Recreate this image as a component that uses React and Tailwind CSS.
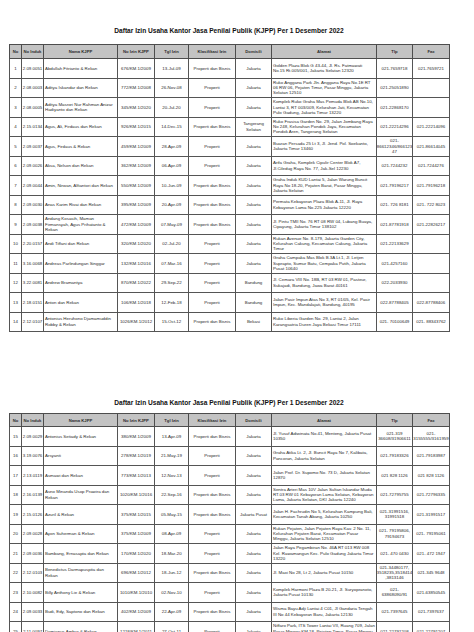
const HEAD = ["No", "No Induk", "Nama KJPP", "No Izin KJPP", "Tgl Izin", "Klasifikasi Izin", "Domisili", "Alamat", "Tlp", "Fax"];
const LEFT = [false, false, true, false, false, false, false, true, false, false];

const PAGE1 = [
  ["1", "2.09.0051", "Abdullah Fitrianto & Rekan", "676/KM.1/2009", "13-Jul-09", "Properti dan Bisnis", "Jakarta", "Golden Plaza Blok G 43-44, Jl. Rs. Fatmawati No.15 Rt.005/001, Jakarta Selatan 12320", "021-7659718", "021-7659721"],
  ["2", "2.08.0003", "Aditya Iskandar dan Rekan", "772/KM.1/2008", "26-Nov-08", "Properti", "Jakarta", "Ruko Anggana Park Jln. Anggana Raya No.1E RT 06 RW 06, Pejaten Timur, Pasar Minggu, Jakarta Selatan 12510", "021-25051890", ""],
  ["3", "2.08.0005", "Aditya Masrori Nur Rahman Anizar Hadiyanto dan Rekan", "345/KM.1/2020", "20-Jul-20", "Properti", "Jakarta", "Komplek Ruko Graha Mas Pemuda Blok AB No.10, Lantai 3, RT 003/009, Kelurahan Jati, Kecamatan Pulo Gadung, Jakarta Timur 13220", "021-22868170", ""],
  ["4", "2.15.0134", "Agus, Ali, Firdaus dan Rekan", "926/KM.1/2015", "14-Dec-15", "Properti dan Bisnis", "Tangerang Selatan", "Ruko Frasisa Garden No. 29, Jalan Jombang Raya No 248, Kelurahan Pondok Jaya, Kecamatan Pondok Aren, Tangerang Selatan", "021-22214296", "021-22214096"],
  ["5", "2.09.0037", "Agus, Firdaus & Rekan", "459/KM.1/2009", "28-Apr-09", "Properti", "Jakarta", "Buaran Persada 25 Lt 3, Jl. Jend. Pol. Soekanto, Jakarta Timur 13460", "021-86612346/866123 47", "021-86614045"],
  ["6", "2.09.0026", "Aksa, Nelson dan Rekan", "362/KM.1/2009", "06-Apr-09", "Properti", "Jakarta", "Arifa Graha, Komplek Cipulir Center Blok A7, Jl.Ciledug Raya No. 77, Jak-Sel 12230", "021-7244232", "021-7244276"],
  ["7", "2.09.0044", "Amin, Nirwan, Alfiantori dan Rekan", "550/KM.1/2009", "10-Jun-09", "Properti dan Bisnis", "Jakarta", "Graha Induk KUD Lantai 5, Jalan Warung Buncit Raya No 18-20, Pejaten Barat, Pasar Minggu, Jakarta Selatan", "021-79196217", "021-79196218"],
  ["8", "2.09.0030", "Anas Karim Rivai dan Rekan", "395/KM.1/2009", "20-Apr-09", "Properti dan Bisnis", "Jakarta", "Permata Kebayoran Plaza Blok A-11, Jl. Raya Kebayoran Lama No.225 Jakarta 12220", "021- 726 8181", "021- 722 8023"],
  ["9", "2.09.0038", "Andang Kosasih, Maman Firmansyah, Agus Prihatanto & Rekan", "472/KM.1/2009", "07-May-09", "Properti dan Bisnis", "Jakarta", "Jl. Pintu TMII No. 76 RT 08 RW 04, Lubang Buaya, Cipayung, Jakarta Timur 138102", "021-87781918", "021-22826217"],
  ["10", "2.20.0157", "Andi Tiffani dan Rekan", "320/KM.1/2020", "02-Jul-20", "Properti", "Jakarta", "Rukan Avenue No. 8-179, Jakarta Garden City, Kelurahan Cakung, Kecamatan Cakung, Jakarta Timur", "021-22133629", ""],
  ["11", "3.16.0068", "Andreas Parlindungan Singgar", "132/KM.1/2016", "07-Mar-16", "Properti", "Jakarta", "Graha Campaka Mas Blok B.3A Lt.1, Jl. Letjen Suprapto, Sumur Batu, Cempaka Putih, Jakarta Pusat 10640", "021-4257160", ""],
  ["12", "3.22.0081", "Andrew Bramantya", "870/KM.1/2022", "29-Sep-22", "Properti", "Bandung", "Jl. Cemara VIII No. 18B, RT 03 RW 01, Pasteur, Sukajadi, Bandung, Jawa Barat 40161", "022-2033930", ""],
  ["13", "2.18.0151", "Anton dan Rekan", "106/KM.1/2018", "12-Feb-18", "Properti", "Bandung", "Jalan Pasir Impun Atas No 3, RT 01/05, Kel. Pasir Impun, Kec. Mandalajati, Bandung, 40195", "022-87788405", "022-87788406"],
  ["14", "2.12.0107", "Antonius Heruhono Djamamuddin Robby & Rekan", "1026/KM.1/2012", "15-Oct-12", "Properti dan Bisnis", "Bekasi", "Ruko Liberia Garden No. 29, Lantai 2, Jalan Karangsatria Duren Jaya Bekasi Timur 17111", "021- 70100649", "021- 88343762"],
];

const PAGE2 = [
  ["15", "2.09.0029", "Antonius Setiady & Rekan", "380/KM.1/2009", "13-Apr-09", "Properti dan Bisnis", "Jakarta", "Jl. Yusuf Adiwinata No.41, Menteng, Jakarta Pusat 10350", "021-319 36608/31906611", "021-3155555/3161959"],
  ["16", "3.19.0076", "Arsyanti", "278/KM.1/2019", "21-May-19", "Properti", "Jakarta", "Graha Atika Lt. 2, Jl. Buncit Raya No 7, Kalibata, Pancoran, Jakarta Selatan", "021-79183326", "021-79183987"],
  ["17", "2.13.0119", "Asmawi dan Rekan", "773/KM.1/2013", "12-Nov-13", "Properti", "Jakarta", "Jalan Prof. Dr. Supomo No. 73 D, Jakarta Selatan 12870", "021 828 1126", "021 828 1126"],
  ["18", "2.16.0139", "Asno Minanda Usop Prawira dan Rekan", "1020/KM.1/2016", "22-Sep-16", "Properti dan Bisnis", "Jakarta", "Sentra Arteri Mas 10V Jalan Sultan Iskandar Muda RT.03 RW 01 Kebayoran Lama Selatan, Kebayoran Lama, Jakarta Selatan, DKI Jakarta 12240", "021-72795755", "021-72796335"],
  ["19", "2.15.0126", "Azuril & Rekan", "375/KM.1/2015", "05-May-15", "Properti dan Bisnis", "Jakarta Pusat", "Jalan H. Fachrudin No 5, Kelurahan Kampung Bali, Kecamatan Tanah Abang, Jakarta 10250", "021-31991516, 31991518", "021-31991517"],
  ["20", "2.09.0028", "Ayon Suherman & Rekan", "375/KM.1/2009", "08-Apr-09", "Properti", "Jakarta", "Rukan Pejaten, Jalan Pejaten Raya Kav. 2 No. 11, Kelurahan Pejaten Barat, Kecamatan Pasar Minggu, Jakarta Selatan 12510", "021- 79195806, 79194673", "021- 79195061"],
  ["21", "2.09.0036", "Bambang, Ernasapta dan Rekan", "170/KM.1/2020", "18-Mar-20", "Properti", "Jakarta", "Jalan Raya Pegambiran No. 46A RT 013 RW 008 Kel. Rawamangun Kec. Pulo Gadung Jakarta Timur 13220", "021- 470 0430", "021- 472 1947"],
  ["22", "2.12.0103", "Benedictus Darmapuspita dan Rekan", "696/KM.1/2012", "18-Jun-12", "Properti dan Bisnis", "Jakarta", "Jl. Maxi No 28, Lt 2, Jakarta Pusat 10150", "021-34480177, 3518235,3518414 ,3813146", "021-345 9648"],
  ["23", "2.10.0082", "Billy Anthony Lie & Rekan", "1010/KM.1/2010", "02-Nov-10", "Properti", "Jakarta", "Komplek Harmoni Plaza B 20-21, Jl. Suryopranoto, Jakarta Pusat 10130", "021-63868090/91", "021-63850545"],
  ["24", "2.09.0033", "Budi, Edy, Saptono dan Rekan", "402/KM.1/2009", "22-Apr-09", "Properti dan Bisnis", "Jakarta", "Wisma Bayu Adji Lantai 4 C01, Jl Gandaria Tengah III No 44 Kebayoran Baru, Jakarta 12130", "021-7397645", "021-7397637"],
  ["25", "2.11.0097", "Damianus Ambur & Rekan", "1218/KM.1/2011", "27-Oct-11", "Properti", "Jakarta", "Niffaro Park, ITS Tower Lantai VII, Ruang 709, Jalan Pasar Minggu KM.18, Pejaten Timur, Pasar Minggu, Jakarta Selatan", "021-22791208", "021-22791207"],
];

const TITLE = "Daftar Izin Usaha Kantor Jasa Penilai Publik (KJPP) Per 1 Desember 2022";

function Cols() {
  return (
    <colgroup>
      <col className="w-[12px]" />
      <col className="w-[22px]" />
      <col className="w-[74px]" />
      <col className="w-[37px]" />
      <col className="w-[34px]" />
      <col className="w-[47px]" />
      <col className="w-[36px]" />
      <col className="w-[105px]" />
      <col className="w-[36px]" />
      <col className="w-[37px]" />
    </colgroup>
  );
}

function Sheet({ rows, headH }) {
  return (
    <table className="ml-[9px] w-[440px] table-fixed border-collapse text-[#2b2b2b]">
      <Cols />
      <thead>
        <tr>
          {HEAD.map((h) => (
            <th key={h} className="border border-[#4d4d4d] bg-[#c3c3c3] p-0">
              <div className={`flex ${headH} items-center justify-center text-center text-[4.2px] font-bold leading-[5px]`}>{h}</div>
            </th>
          ))}
        </tr>
      </thead>
      <tbody>
        {rows.map((r) => (
          <tr key={r[0]}>
            {r.map((c, i) => (
              <td key={i} className="border border-[#555] p-0">
                <div className={`flex h-[18.5px] items-center overflow-hidden px-[1px] text-[4.4px] leading-[5.3px] break-words ${LEFT[i] ? "justify-start text-left" : "justify-center text-center"}`}>
                  <span>{c}</span>
                </div>
              </td>
            ))}
          </tr>
        ))}
      </tbody>
    </table>
  );
}

export default function App() {
  return (
    <div className="h-[632px] w-[474px] overflow-hidden bg-white font-['Liberation_Sans',Arial,sans-serif]">
      <h1 className="ml-[9px] w-[440px] pt-[27px] text-center text-[6.6px] font-bold leading-[8px] text-[#111]">{TITLE}</h1>
      <div className="h-[9px]" />
      <Sheet rows={PAGE1} headH="h-[13px]" />
      <h1 className="ml-[9px] mt-[67px] w-[440px] text-center text-[6.6px] font-bold leading-[8px] text-[#111]">{TITLE}</h1>
      <div className="h-[6px]" />
      <Sheet rows={PAGE2} headH="h-[12px]" />
    </div>
  );
}
